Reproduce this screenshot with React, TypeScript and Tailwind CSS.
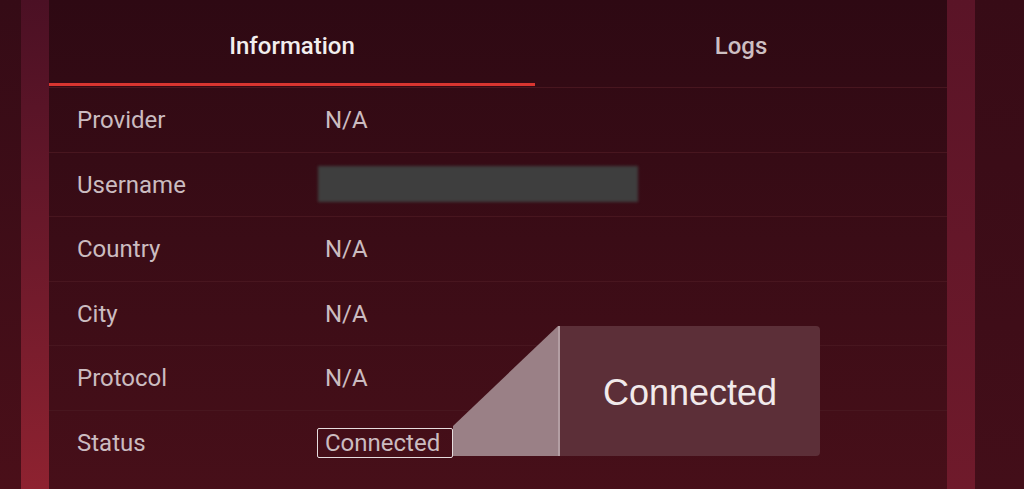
import React from 'react';

const rows = [
  { label: 'Provider', value: 'N/A' },
  { label: 'Username', value: '' },
  { label: 'Country', value: 'N/A' },
  { label: 'City', value: 'N/A' },
  { label: 'Protocol', value: 'N/A' },
  { label: 'Status', value: 'Connected' },
];

const Callout: React.FC = () => (
  <div className="absolute left-[453px] top-[326px] flex h-[130px] pointer-events-none">
    {/* magnifier wedge */}
    <svg width="107" height="130" viewBox="0 0 107 130" className="block">
      <polygon points="0,100 105,0 107,0 107,130 0,130" fill="#9a8086" />
      <rect x="105" y="0" width="2" height="130" fill="#b39ea3" />
    </svg>
    <div className="flex w-[260px] items-center justify-center rounded-r-[4px] bg-[#5c2f38] pt-[4px] text-[36px] text-[#f1eaeb] [font-family:'Liberation_Sans',Arial,sans-serif]">
      Connected
    </div>
  </div>
);

export default function App() {
  return (
    <div className="relative flex h-[489px] w-[1024px] overflow-hidden bg-gradient-to-b from-[#350b16] to-[#4a0f19] [font-family:Roboto,'Noto_Sans',sans-serif]">
      <div className="w-[21px]" />
      <div className="w-[28px] bg-gradient-to-b from-[#4b1024] to-[#8e2230]" />

      <div className="flex w-[898px] flex-col bg-gradient-to-b from-[#2e0913] to-[#470f19]">
        {/* tabs */}
        <div className="flex h-[88px] border-b border-[#48161f]">
          <div className="relative flex w-[486px] items-center justify-center pt-[4px] text-[24px] font-medium text-[#f2eeee]">
            Information
            <div className="absolute bottom-[1px] left-0 right-0 h-[3px] bg-[#d93530]" />
          </div>
          <div className="flex flex-1 items-center justify-center pt-[4px] text-[24px] font-medium text-[#cdbfc2]">
            Logs
          </div>
        </div>

        {/* info rows */}
        {rows.map((r, i) => (
          <div
            key={r.label}
            className={`flex h-[64.5px] items-center pl-[28px] text-[24px] text-[#cbbcc0] ${i < rows.length - 1 ? 'border-b border-[#48161f]' : ''}`}
          >
            <div className="w-[248px] pt-[1px]">{r.label}</div>
            {r.label === 'Username' ? (
              <div className="-ml-[7px] h-[36px] w-[320px] bg-[#3e3e3e] blur-[1.5px]" />
            ) : r.label === 'Status' ? (
              <div className="-ml-[8px] flex h-[30px] w-[136px] items-center rounded-[2px] border border-[#e6dcde] pl-[7px] pt-[1px] leading-none">
                {r.value}
              </div>
            ) : (
              <div className="pt-[1px]">{r.value}</div>
            )}
          </div>
        ))}
      </div>

      <div className="w-[28px] bg-gradient-to-b from-[#5a1427] to-[#6f1a2b]" />
      <div className="flex-1 bg-gradient-to-b from-[#370b16] to-[#430e19]" />

      <Callout />
    </div>
  );
}
